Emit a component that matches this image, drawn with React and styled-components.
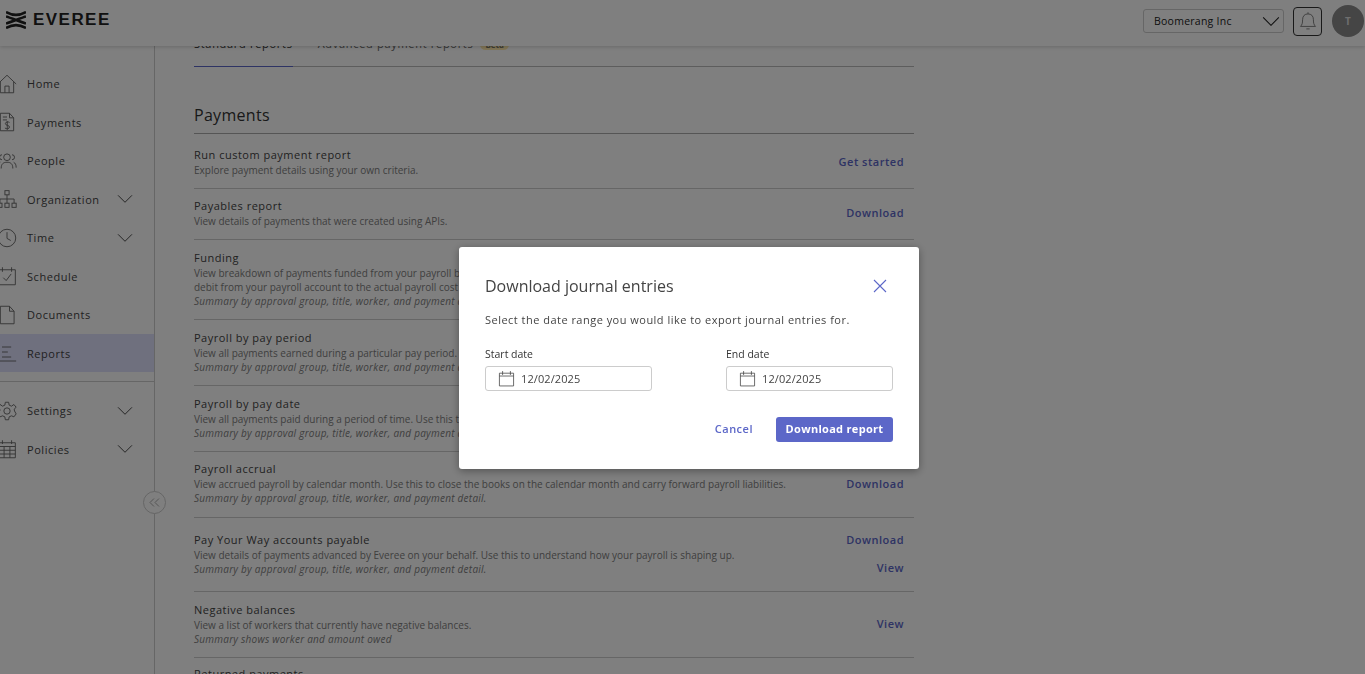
import React from 'react'
import styled, {createGlobalStyle} from 'styled-components'

const GlobalStyle = createGlobalStyle`
  html, body {
    margin: 0;
    height: 100%;
    overflow: hidden;
    background: #fff;
    font-family: "Open Sans", "Liberation Sans", sans-serif;
  }
  * { box-sizing: border-box; }
`;

const Page = styled.div`
  height: 674px;
  display: flex;
  flex-direction: column;
  overflow: hidden;
`;

const Header = styled.header`
  flex: 0 0 46px;
  display: flex;
  align-items: center;
  justify-content: space-between;
  padding: 0 1px 4px 6px;
  background: #fff;
  box-shadow: 0 1px 4px rgba(0, 0, 0, .18);
  position: relative;
  z-index: 2;
`;

const Logo = styled.div`
  display: flex;
  align-items: center;
  gap: 7px;
  margin-bottom: 3px;
  color: #222;
`;

const LogoText = styled.span`
  font-family: "Liberation Sans", sans-serif;
  font-size: 16px;
  line-height: 18px;
  font-weight: 700;
  letter-spacing: 1.4px;
  transform: scaleX(1.06);
  transform-origin: left center;
`;

const HeaderRight = styled.div`
  display: flex;
  align-items: center;
`;

const CompanySelect = styled.div`
  width: 141px;
  height: 24px;
  padding: 0 3px 0 10px;
  display: flex;
  align-items: center;
  justify-content: space-between;
  border: 1px solid #ccc;
  border-radius: 3px;
  font-size: 10.5px;
  letter-spacing: .25px;
  color: #222;
`;

const BellButton = styled.div`
  width: 29px;
  height: 29px;
  margin-left: 9px;
  display: flex;
  align-items: center;
  justify-content: center;
  border: 1px solid #333;
  border-radius: 4px;
  color: #777;
`;

const Avatar = styled.div`
  width: 32px;
  height: 32px;
  margin-left: 10px;
  display: flex;
  align-items: center;
  justify-content: center;
  border-radius: 50%;
  background: #8a8a8a;
  color: #ddd;
  font-size: 10px;
  font-weight: 700;
`;

const Body = styled.div`
  flex: 1;
  display: flex;
  min-height: 0;
`;

const Sidebar = styled.aside`
  flex: 0 0 155px;
  position: relative;
  padding-top: 18.4px;
  border-right: 1px solid #ccc;
`;

const NavItem = styled.div`
  height: 38.5px;
  padding: 0 21px 0 3px;
  margin-left: -3px;
  display: flex;
  align-items: center;
  gap: 10px;
  font-size: 11px;
  letter-spacing: .55px;
  color: #444;
  background: ${({$active}) => ($active ? '#dfe0fd' : 'transparent')};

  svg:first-child {
    margin-left: -3px;
    color: #666;
  }
`;

const NavLabel = styled.span`
  flex: 1;
`;

const NavDivider = styled.div`
  height: 1px;
  margin: 9px 0 9px;
  background: #ccc;
`;

const Collapse = styled.div`
  position: absolute;
  right: -12px;
  top: 445px;
  width: 23px;
  height: 23px;
  display: flex;
  align-items: center;
  justify-content: center;
  border: 1px solid #ccc;
  border-radius: 50%;
  background: #fff;
  color: #aaa;
`;

const Content = styled.main`
  width: 720px;
  margin-left: 39px;
  margin-top: -14px;
`;

const Tabs = styled.div`
  height: 35px;
  display: flex;
  align-items: flex-start;
  gap: 25px;
  border-bottom: 1px solid #bbb;
`;

const Tab = styled.div`
  height: 35px;
  padding-top: 4px;
  display: flex;
  gap: 7px;
  font-size: 11px;
  letter-spacing: .7px;
  color: ${({$active}) => ($active ? '#333' : '#666')};
  border-bottom: 1px solid ${({$active}) => ($active ? '#5c67c8' : 'transparent')};
`;

const Badge = styled.span`
  height: 11px;
  margin-top: 3px;
  padding: 0 5px;
  border-radius: 6px;
  background: #ffe9ad;
  color: #776;
  font-size: 8px;
  letter-spacing: 0;
  line-height: 11px;
  font-weight: 700;
`;

const SectionTitle = styled.h2`
  margin: 37px 0 0;
  padding-bottom: 7px;
  font-size: 16px;
  line-height: 22px;
  font-weight: 400;
  letter-spacing: .3px;
  color: #333;
  border-bottom: 1px solid #aaa;
`;

const Row = styled.div`
  min-height: ${({$h}) => $h}px;
  padding: ${({$top}) => $top}px 10px 0 0;
  display: flex;
  justify-content: space-between;
  border-bottom: 1px solid #ccc;
`;

const RowText = styled.div`
  width: 620px;
`;

const RowTitle = styled.div`
  margin-bottom: 1px;
  font-size: 11px;
  line-height: 15px;
  letter-spacing: .5px;
  color: #444;
`;

const RowDesc = styled.div`
  font-size: 10px;
  line-height: 14.2px;
  color: #808080;
`;

const RowNote = styled(RowDesc)`
  font-style: italic;
  letter-spacing: .25px;
`;

const Actions = styled.div`
  display: flex;
  flex-direction: column;
  align-items: flex-end;
  gap: 13px;
  padding-top: ${({$top}) => $top}px;
`;

const ActionLink = styled.a`
  font-size: 11px;
  line-height: 15px;
  font-weight: 600;
  letter-spacing: .5px;
  color: #5c67c8;
`;

const Overlay = styled.div`
  position: fixed;
  inset: 0;
  z-index: 5;
  background: rgba(0, 0, 0, .5);
`;

const Modal = styled.div`
  position: absolute;
  left: 459px;
  top: 247px;
  width: 460px;
  height: 222px;
  padding: 26px 26px 0;
  background: #fff;
  border-radius: 3px;
  box-shadow: 0 2px 8px rgba(0, 0, 0, .35);
`;

const ModalHead = styled.div`
  display: flex;
  align-items: center;
  justify-content: space-between;
  padding-right: 6px;
`;

const ModalTitle = styled.h3`
  margin: 0;
  font-size: 16px;
  line-height: 26px;
  font-weight: 400;
  color: #444;
`;

const CloseIcon = styled.svg`
  width: 14px;
  height: 14px;
  color: #5c67c8;
`;

const ModalText = styled.p`
  margin: 13px 0 0;
  font-size: 11px;
  line-height: 16px;
  letter-spacing: .48px;
  color: #444;
`;

const DateGrid = styled.div`
  margin-top: 19px;
  display: flex;
  justify-content: space-between;
`;

const Field = styled.div`
  width: 167px;
`;

const FieldLabel = styled.div`
  font-size: 10.5px;
  line-height: 15px;
  color: #333;
`;

const DateInput = styled.div`
  height: 25px;
  margin-top: 4px;
  padding-left: 12px;
  display: flex;
  align-items: center;
  gap: 6px;
  border: 1px solid #ccc;
  border-radius: 3px;
  font-size: 11px;
  letter-spacing: .1px;
  color: #444;
`;

const ModalActions = styled.div`
  margin-top: 26px;
  display: flex;
  align-items: center;
  justify-content: flex-end;
  gap: 23px;
`;

const CancelButton = styled.a`
  margin-bottom: 2px;
  font-size: 11px;
  font-weight: 600;
  letter-spacing: .5px;
  color: #5c67c8;
`;

const PrimaryButton = styled.div`
  width: 117px;
  height: 25px;
  padding-bottom: 2px;
  display: flex;
  align-items: center;
  justify-content: center;
  border-radius: 3px;
  background: #5c67c8;
  color: #fff;
  font-size: 11px;
  font-weight: 700;
  letter-spacing: .3px;
`;

const Icon = ({children, size = 20}) => (
    <svg width={size} height={size} viewBox="0 0 24 24" fill="none" stroke="currentColor" strokeWidth="1.1" style={{flexShrink: 0}}>
        {children}
    </svg>
);

const Chevron = ({size = 18}) => (
    <svg width={size} height={size * .6} viewBox="0 0 18 11" fill="none" stroke="currentColor" strokeWidth="1.1" style={{flexShrink: 0}}>
        <path d="M1 1.5 9 9.5 17 1.5"/>
    </svg>
);

const navIcons = {
    home: <Icon><path d="M1 12 12 1.5 23 12M4 9.5V22.5H20V9.5M9.5 22.5V14.5H14.5V22.5"/></Icon>,
    payments: <Icon><path d="M4 1.500H15L20 7V22.500H4ZM15 1.500V7H20M7 6H12M7 9.500H12"/><path d="M15 12.500C14 11.600 10 11.500 10 14 10 16.500 15 15.500 15 18 15 20.500 11 20.500 9.500 19.200M12.300 11V21.500"/></Icon>,
    people: <Icon><circle cx="12" cy="7.500" r="4"/><path d="M5 21C5 15 8 13.500 12 13.500S19 15 19 21M6 4.500A3 3 0 0 0 6 10.500M18 4.500A3 3 0 0 1 18 10.500M1 20C1 16.500 2 14.500 4 13.500M23 20C23 16.500 22 14.500 20 13.500"/></Icon>,
    org: <Icon><rect x="9.500" y="2" width="5" height="5"/><rect x="1" y="17" width="5" height="5"/><rect x="9.500" y="17" width="5" height="5"/><rect x="18" y="17" width="5" height="5"/><path d="M12 7V17M3.500 17V12H20.500V17"/></Icon>,
    time: <Icon><circle cx="12" cy="12" r="10.500"/><path d="M12 5V12.500L16.500 15"/></Icon>,
    schedule: <Icon><path d="M2 4.500H22V22.500H2ZM6.500 1.500V7M17.500 1.500V7M7.500 14 11 17.500 17 9.500"/></Icon>,
    documents: <Icon><path d="M4 1.500H15L20.500 7.500V22.500H4ZM15 1.500V7.500H20.500"/></Icon>,
    reports: <Icon><path d="M6 4.800H17M6 10.800H13M6 16.800H17M1 21.600H23"/></Icon>,
    settings: <Icon><circle cx="12" cy="12" r="3.800"/><path d="M10 1.500H14L14.600 5 17.400 6.200 20.300 4.200 23 7.500 20.600 9.800 21 12 23 15.500 20.300 19 17.400 17.800 14.600 19 14 22.500H10L9.400 19 6.600 17.800 3.700 19 1 15.500 3.400 12 3.400 9.800 1 7.500 3.700 4.200 6.600 6.200 9.400 5Z"/></Icon>,
    policies: <Icon><path d="M2 4.500H22V22.500H2ZM6.500 1.500V6M17.500 1.500V6M2 9H22M2 13.500H22M2 18H22M8.500 9V22.500M15.500 9V22.500"/></Icon>,
};

const navItems = [
    {key: 'home', label: 'Home'},
    {key: 'payments', label: 'Payments'},
    {key: 'people', label: 'People'},
    {key: 'org', label: 'Organization', sub: true},
    {key: 'time', label: 'Time', sub: true},
    {key: 'schedule', label: 'Schedule'},
    {key: 'documents', label: 'Documents'},
    {key: 'reports', label: 'Reports', active: true},
];

const navItemsBottom = [
    {key: 'settings', label: 'Settings', sub: true},
    {key: 'policies', label: 'Policies', sub: true},
];

const SUMMARY = 'Summary by approval group, title, worker, and payment detail.';

const reports = [
    {title: 'Run custom payment report', desc: ['Explore payment details using your own criteria.'], links: ['Get started'], h: 55, top: 13, linkTop: 7},
    {title: 'Payables report', desc: ['View details of payments that were created using APIs.'], links: ['Download'], h: 51, top: 9, linkTop: 7},
    {title: 'Funding', desc: ['View breakdown of payments funded from your payroll bank account. Use this to reconcile the', 'debit from your payroll account to the actual payroll cost of each pay period.'], note: SUMMARY, links: ['Download'], h: 80, top: 10, linkTop: 10},
    {title: 'Payroll by pay period', desc: ['View all payments earned during a particular pay period. Use this to review payroll costs.'], note: SUMMARY, links: ['Download'], h: 66, top: 10, linkTop: 10},
    {title: 'Payroll by pay date', desc: ['View all payments paid during a period of time. Use this to review cash requirements.'], note: SUMMARY, links: ['Download'], h: 66, top: 10, linkTop: 10},
    {title: 'Payroll accrual', desc: ['View accrued payroll by calendar month. Use this to close the books on the calendar month and carry forward payroll liabilities.'], note: SUMMARY, links: ['Download'], h: 66, top: 9, linkTop: 15},
    {title: 'Pay Your Way accounts payable', desc: ['View details of payments advanced by Everee on your behalf. Use this to understand how your payroll is shaping up.'], note: SUMMARY, links: ['Download', 'View'], h: 74, top: 14, linkTop: 0},
    {title: 'Negative balances', desc: ['View a list of workers that currently have negative balances.'], note: 'Summary shows worker and amount owed', links: ['View'], h: 66, top: 10, linkTop: 14},
    {title: 'Returned payments', desc: ['View payments that were returned.'], links: ['View'], h: 60, top: 8, linkTop: 15},
];

const DateField = ({label}) => (
    <Field>
        <FieldLabel>{label}</FieldLabel>
        <DateInput>
            <Icon size={17}><path d="M2 4.500H22V22.500H2ZM6.500 1.500V7M17.500 1.500V7M2 8.500H22"/></Icon>
            <span>12/02/2025</span>
        </DateInput>
    </Field>
);

const NavRow = ({item}) => (
    <NavItem $active={item.active}>
        {navIcons[item.key]}
        <NavLabel>{item.label}</NavLabel>
        {item.sub && <Chevron size={16}/>}
    </NavItem>
);

const App = () => {
    return (
        <Page>
            <GlobalStyle/>
            <Header>
                <Logo>
                    <svg width="20" height="18" viewBox="0 0 20 18" fill="none" stroke="currentColor" strokeWidth="2.6">
                        <path d="M0 1C7 5 13 5 20 1M0 17C7 13 13 13 20 17M0 5.500C6 7.500 14 10.500 20 12.500M20 5.500C14 7.500 6 10.500 0 12.500"/>
                    </svg>
                    <LogoText>EVEREE</LogoText>
                </Logo>
                <HeaderRight>
                    <CompanySelect>
                        Boomerang Inc
                        <Chevron size={18}/>
                    </CompanySelect>
                    <BellButton>
                        <Icon size={20}><path d="M3 18.500C5 16.500 5.500 14.500 5.500 10.500 5.500 6 8 3.500 12 3.500S18.500 6 18.500 10.500C18.500 14.500 19 16.500 21 18.500ZM12 1.500V3.500M10 21.500H14"/></Icon>
                    </BellButton>
                    <Avatar>T</Avatar>
                </HeaderRight>
            </Header>
            <Body>
                <Sidebar>
                    {navItems.map(item => <NavRow key={item.key} item={item}/>)}
                    <NavDivider/>
                    {navItemsBottom.map(item => <NavRow key={item.key} item={item}/>)}
                    <Collapse>
                        <svg width="11" height="9" viewBox="0 0 11 9" fill="none" stroke="currentColor">
                            <path d="M5 .5 1 4.500 5 8.500M10 .5 6 4.500 10 8.500"/>
                        </svg>
                    </Collapse>
                </Sidebar>
                <Content>
                    <Tabs>
                        <Tab $active>Standard reports</Tab>
                        <Tab>Advanced payment reports<Badge>Beta</Badge></Tab>
                    </Tabs>
                    <SectionTitle>Payments</SectionTitle>
                    {reports.map(report => (
                        <Row key={report.title} $h={report.h} $top={report.top}>
                            <RowText>
                                <RowTitle>{report.title}</RowTitle>
                                {report.desc.map(line => <RowDesc key={line}>{line}</RowDesc>)}
                                {report.note && <RowNote>{report.note}</RowNote>}
                            </RowText>
                            <Actions $top={report.linkTop}>
                                {report.links.map(link => <ActionLink key={link}>{link}</ActionLink>)}
                            </Actions>
                        </Row>
                    ))}
                </Content>
            </Body>
            <Overlay>
                <Modal>
                    <ModalHead>
                        <ModalTitle>Download journal entries</ModalTitle>
                        <CloseIcon viewBox="0 0 14 14" fill="none" stroke="currentColor" strokeWidth="1.1">
                            <path d="M1 1 13 13M13 1 1 13"/>
                        </CloseIcon>
                    </ModalHead>
                    <ModalText>Select the date range you would like to export journal entries for.</ModalText>
                    <DateGrid>
                        <DateField label="Start date"/>
                        <DateField label="End date"/>
                    </DateGrid>
                    <ModalActions>
                        <CancelButton>Cancel</CancelButton>
                        <PrimaryButton>Download report</PrimaryButton>
                    </ModalActions>
                </Modal>
            </Overlay>
        </Page>
    );
};

export default App
